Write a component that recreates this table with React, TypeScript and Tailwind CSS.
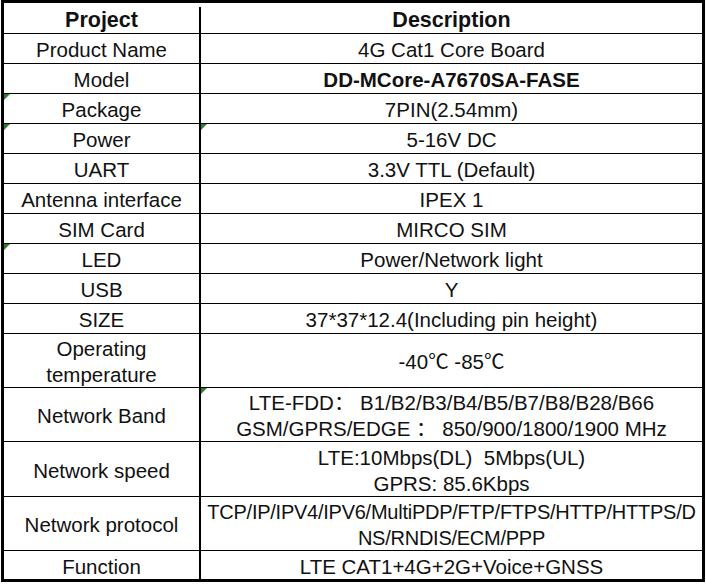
import React from 'react'

type Row = {
  label: React.ReactNode
  value: React.ReactNode
  h: string
  bold?: boolean
  tight?: boolean
  markL?: boolean
  markR?: boolean
  last?: boolean
}

const rows: Row[] = [
  { label: 'Product Name', value: '4G Cat1 Core Board', h: 'h-[30px]' },
  { label: 'Model', value: 'DD-MCore-A7670SA-FASE', h: 'h-[30px]', bold: true },
  { label: 'Package', value: '7PIN(2.54mm)', h: 'h-[30px]', markL: true },
  { label: 'Power', value: '5-16V DC', h: 'h-[30px]', markL: true, markR: true },
  { label: 'UART', value: '3.3V TTL (Default)', h: 'h-[30px]' },
  { label: 'Antenna interface', value: 'IPEX 1', h: 'h-[30px]' },
  { label: 'SIM Card', value: 'MIRCO SIM', h: 'h-[30px]' },
  { label: 'LED', value: 'Power/Network light', h: 'h-[30px]', markL: true },
  { label: 'USB', value: 'Y', h: 'h-[30px]' },
  { label: 'SIZE', value: '37*37*12.4(Including pin height)', h: 'h-[30px]' },
  {
    label: (
      <>
        Operating
        <br />
        temperature
      </>
    ),
    value: '-40℃ -85℃',
    h: 'h-[54px]',
  },
  {
    label: 'Network Band',
    value: (
      <>
        LTE-FDD：&nbsp;B1/B2/B3/B4/B5/B7/B8/B28/B66
        <br />
        GSM/GPRS/EDGE ：&nbsp;850/900/1800/1900 MHz
      </>
    ),
    h: 'h-[54px]',
    markR: true,
  },
  {
    label: 'Network speed',
    value: (
      <>
        LTE:10Mbps(DL)&nbsp;&nbsp;5Mbps(UL)
        <br />
        GPRS: 85.6Kbps
      </>
    ),
    h: 'h-[55px]',
  },
  {
    label: 'Network protocol',
    value: (
      <>
        TCP/IP/IPV4/IPV6/MultiPDP/FTP/FTPS/HTTP/HTTPS/D
        <br />
        NS/RNDIS/ECM/PPP
      </>
    ),
    h: 'h-[54px]',
    tight: true,
  },
  { label: 'Function', value: 'LTE CAT1+4G+2G+Voice+GNSS', h: 'h-[28px]', last: true },
]

function Mark() {
  return (
    <span className="absolute left-0 top-0 w-0 h-0 border-t-[6px] border-t-[#2e7d32] border-r-[6px] border-r-transparent" />
  )
}

export default function App() {
  return (
    <div className="w-[706px] h-[587px] bg-white text-[#111] font-['Liberation_Sans','Noto_Sans_CJK_SC',sans-serif] text-[20.5px] leading-[26px]">
      <div className="ml-[1px] w-[704px] border-[3px] border-black">
        <div className="flex h-[31px] border-b border-black font-bold text-[21.5px] pt-[4px]">
          <div className="w-[197px] shrink-0 border-r-2 border-black flex items-center justify-center">Project</div>
          <div className="flex-1 min-w-0 flex items-center justify-center">Description</div>
        </div>
        {rows.map((r, i) => (
          <div key={i} className={`flex ${r.h} ${r.last ? '' : 'border-b border-black'}`}>
            <div className="relative w-[197px] shrink-0 border-r-2 border-black flex items-center justify-center text-center pt-[3px]">
              {r.markL && <Mark />}
              <span>{r.label}</span>
            </div>
            <div
              className={`relative flex-1 min-w-0 overflow-hidden flex items-center justify-center text-center whitespace-nowrap pt-[3px] ${r.bold ? 'font-bold' : ''} ${r.tight ? 'text-[20px] tracking-[-0.25px]' : ''}`}
            >
              {r.markR && <Mark />}
              <span>{r.value}</span>
            </div>
          </div>
        ))}
      </div>
    </div>
  )
}
